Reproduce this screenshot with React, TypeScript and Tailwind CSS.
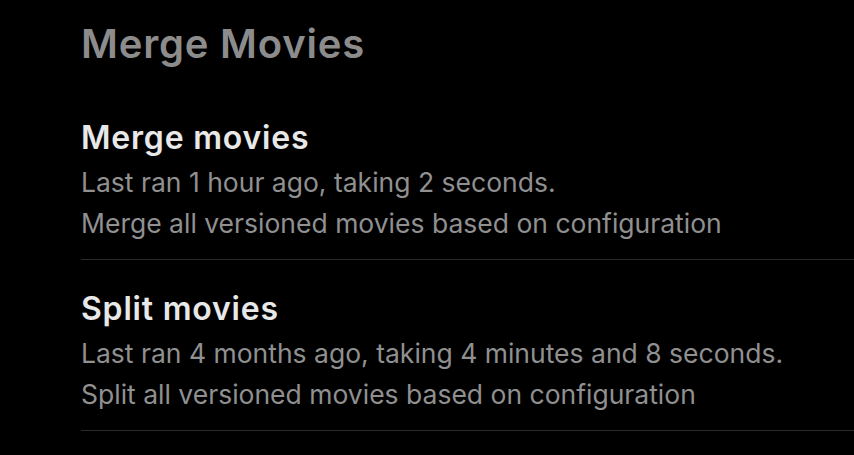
const tasks = [
  {
    name: 'Merge movies',
    lastRan: 'Last ran 1 hour ago, taking 2 seconds.',
    description: 'Merge all versioned movies based on configuration',
  },
  {
    name: 'Split movies',
    lastRan: 'Last ran 4 months ago, taking 4 minutes and 8 seconds.',
    description: 'Split all versioned movies based on configuration',
  },
]

export default function App() {
  return (
    <div className="min-h-screen bg-black pl-[81px] font-['Inter',sans-serif]">
      <h1 className="pt-[20px] text-[40px] leading-[48px] font-semibold tracking-[0.8px] text-[#8c8c8c]">
        Merge Movies
      </h1>
      <div className="mt-[50px]">
        {tasks.map((task) => (
          <div key={task.name} className="border-b border-[#2a2a2a] pb-[15px] pt-[29px] first:pt-0">
            <h2 className="text-[32px] leading-[40px] font-semibold tracking-[0.8px] text-[#e8e8e8]">{task.name}</h2>
            <p className="mt-[3px] text-[26.5px] leading-[42px] text-[#909090]">{task.lastRan}</p>
            <p className="text-[26.5px] leading-[41px] text-[#909090]">{task.description}</p>
          </div>
        ))}
      </div>
    </div>
  )
}
